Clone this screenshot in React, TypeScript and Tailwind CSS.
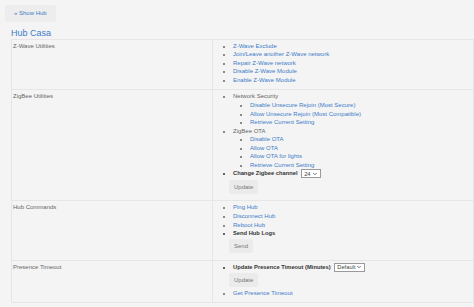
import { ChevronDown } from "lucide-react";

const zwave = [
  "Z-Wave Exclude",
  "Join/Leave another Z-Wave network",
  "Repair Z-Wave network",
  "Disable Z-Wave Module",
  "Enable Z-Wave Module",
];

function Link({ children }: { children: React.ReactNode }) {
  return <a className="text-[#3d7cc9] cursor-pointer">{children}</a>;
}

function Btn({ label }: { label: string }) {
  return (
    <div className="flex py-[1.5px] pl-[15px]">
      <span className="flex h-[14px] items-center rounded-[2px] bg-[#ebebeb] px-[5px] text-[#777]">{label}</span>
    </div>
  );
}

function FakeSelect({ value }: { value: string }) {
  return (
    <span className="ml-[2px] inline-flex h-[9px] items-center gap-[1px] border border-[#9a9a9a] bg-white px-[2px] align-middle font-normal text-[#444]">
      {value}
      <ChevronDown size={6} strokeWidth={3} />
    </span>
  );
}

export default function App() {
  const cell = "border border-[#e6e6e6] align-top pt-[2px] pb-[5px]";
  const bold = "font-bold text-[#333] text-[5.75px]";
  return (
    <div className="min-h-[307px] bg-[#f4f4f4] pl-[11px] pt-[5px] font-['Liberation_Sans',Arial,sans-serif] text-[6px] leading-[8.57px] text-[#666]">
      <div className="flex">
        <span className="ml-[-6px] inline-block rounded-[2px] bg-[#ededed] px-[9px] py-[4px] text-[#3d7cc9]">« Show Hub</span>
      </div>
      <h2 className="mt-[6px] text-[9px] leading-[11px] text-[#3d7cc9]">Hub Casa</h2>
      <table className="w-[463px] border-collapse">
        <tbody>
          <tr>
            <td className={`${cell} w-[201px] px-[1px]`}>Z-Wave Utilities</td>
            <td className={`${cell} pl-[1px]`}>
              <ul className="list-disc pl-[19px]">
                {zwave.map((z) => (
                  <li key={z}>
                    <Link>{z}</Link>
                  </li>
                ))}
              </ul>
            </td>
          </tr>
          <tr>
            <td className={`${cell} px-[1px]`}>ZigBee Utilities</td>
            <td className={`${cell} pl-[1px]`}>
              <ul className="list-disc pl-[19px]">
                <li>
                  Network Security
                  <ul className="list-disc pl-[17px]">
                    <li><Link>Disable Unsecure Rejoin (Most Secure)</Link></li>
                    <li><Link>Allow Unsecure Rejoin (Most Compatible)</Link></li>
                    <li><Link>Retrieve Current Setting</Link></li>
                  </ul>
                </li>
                <li>
                  ZigBee OTA
                  <ul className="list-disc pl-[17px]">
                    <li><Link>Disable OTA</Link></li>
                    <li><Link>Allow OTA</Link></li>
                    <li><Link>Allow OTA for lights</Link></li>
                    <li><Link>Retrieve Current Setting</Link></li>
                  </ul>
                </li>
                <li className={bold}>
                  Change Zigbee channel <FakeSelect value="24" />
                </li>
              </ul>
              <Btn label="Update" />
            </td>
          </tr>
          <tr>
            <td className={`${cell} px-[1px]`}>Hub Commands</td>
            <td className={`${cell} pl-[1px]`}>
              <ul className="list-disc pl-[19px]">
                <li><Link>Ping Hub</Link></li>
                <li><Link>Disconnect Hub</Link></li>
                <li><Link>Reboot Hub</Link></li>
                <li className={bold}>Send Hub Logs</li>
              </ul>
              <Btn label="Send" />
            </td>
          </tr>
          <tr>
            <td className={`${cell} px-[1px]`}>Presence Timeout</td>
            <td className={`${cell} pl-[1px]`}>
              <ul className="list-disc pl-[19px]">
                <li className={bold}>
                  Update Presence Timeout (Minutes) <FakeSelect value="Default" />
                </li>
              </ul>
              <Btn label="Update" />
              <ul className="list-disc pl-[19px]">
                <li><Link>Get Presence Timeout</Link></li>
              </ul>
            </td>
          </tr>
        </tbody>
      </table>
    </div>
  );
}
